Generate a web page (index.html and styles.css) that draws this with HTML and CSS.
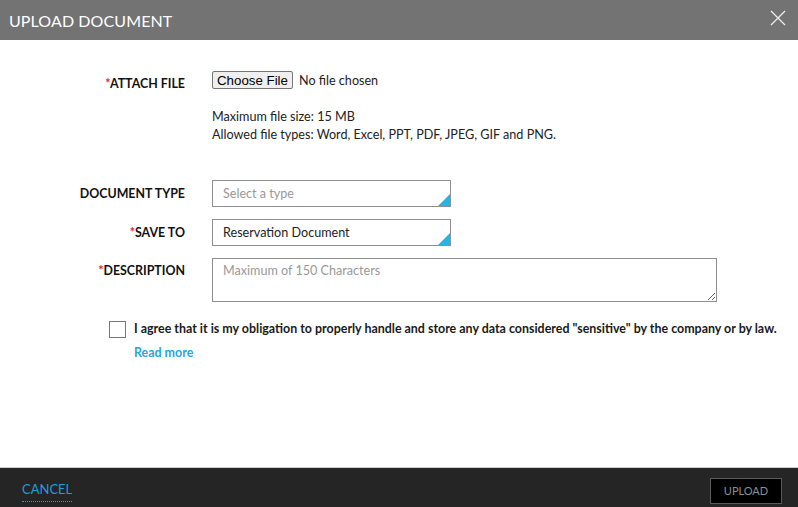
FILE: index.html
```html
<!DOCTYPE html>
<html>
<head>
<meta charset="utf-8">
<link rel="stylesheet" href="styles.css">
</head>
<body>
<div class="dialog">
  <div class="header">
    <div class="title">UPLOAD DOCUMENT</div>
    <div class="close">
      <svg width="16" height="16" viewBox="0 0 16 16"><path d="M1 1L15 15M15 1L1 15" stroke="#eeeeee" stroke-width="1.3" fill="none"/></svg>
    </div>
  </div>
  <div class="content">
    <div class="row row-file">
      <div class="label"><span class="req">*</span>ATTACH FILE</div>
      <div class="field">
        <input type="file" class="file">
      </div>
    </div>
    <div class="row row-hint">
      <div></div>
      <div class="hint">Maximum file size: 15 MB<br>Allowed file types: Word, Excel, PPT, PDF, JPEG, GIF and PNG.</div>
    </div>
    <div class="row row-select first">
      <div class="label">DOCUMENT TYPE</div>
      <div class="select placeholder">Select a type<span class="tri"></span></div>
    </div>
    <div class="row row-select">
      <div class="label"><span class="req">*</span>SAVE TO</div>
      <div class="select">Reservation Document<span class="tri"></span></div>
    </div>
    <div class="row row-desc">
      <div class="label"><span class="req">*</span>DESCRIPTION</div>
      <textarea class="desc" placeholder="Maximum of 150 Characters"></textarea>
    </div>
    <div class="agree">
      <span class="box"></span>
      <div class="agree-text">
        <div>I agree that it is my obligation to properly handle and store any data considered "sensitive" by the company or by law.</div>
        <a class="more">Read more</a>
      </div>
    </div>
  </div>
  <div class="footer">
    <a class="cancel">CANCEL</a>
    <button class="upload">UPLOAD</button>
  </div>
</div>
</body>
</html>
```
FILE: styles.css
```css
* { box-sizing: border-box; }
html, body { margin: 0; padding: 0; }
body {
  width: 798px;
  height: 507px;
  font-family: Lato, "Open Sans", sans-serif;
  background: #fff;
  color: #222;
}
.dialog { display: flex; flex-direction: column; height: 507px; }
.header {
  height: 40px;
  background: #737373;
  display: flex;
  align-items: center;
  padding: 0 12px 0 9px;
}
.title { color: #fff; font-size: 16px; letter-spacing: 0.1px; }
.close { margin-left: auto; display: flex; margin-top: -4px; }
.content { flex: 1; padding-top: 31px; }
.row {
  display: grid;
  grid-template-columns: 185px 1fr;
  column-gap: 27px;
}
.label {
  text-align: right;
  font-weight: 700;
  font-size: 12.4px;
  color: #111;
  white-space: nowrap;
}
.req { color: #e0262b; }
.row-file .label { padding-top: 5px; }
.field { display: flex; }
.file {
  font-family: Lato, sans-serif;
  font-size: 12.6px;
  color: #222;
  margin: 0;
  height: 18px;
}
.file::file-selector-button {
  font-family: "Liberation Sans", Arial, sans-serif;
  font-size: 13.3px;
  height: 18px;
  width: 81px;
  padding: 0;
  margin: 0 6px 0 0;
  background: #efefef;
  border: 1px solid #767676;
  border-radius: 2px;
  color: #000;
}
.row-hint { margin-top: 17px; }
.hint { font-size: 12.6px; line-height: 18px; color: #222; }
.row-select { margin-top: 12px; align-items: center; }
.row-select.first { margin-top: 36px; }
.select {
  position: relative;
  width: 239px;
  height: 27px;
  border: 1px solid #8f8f8f;
  font-size: 12.6px;
  line-height: 25px;
  padding-left: 10px;
  color: #222;
}
.select.placeholder { color: #999; }
.tri {
  position: absolute;
  right: 0;
  bottom: 0;
  width: 0;
  height: 0;
  border-style: solid;
  border-width: 0 0 12px 12px;
  border-color: transparent transparent #26b5e2 transparent;
}
.row-desc { margin-top: 12px; }
.row-desc .label { padding-top: 5px; }
.desc {
  display: block;
  width: 505px;
  height: 44px;
  border: 1px solid #8f8f8f;
  font-family: Lato, sans-serif;
  font-size: 12.6px;
  padding: 4px 10px;
  margin: 0;
  resize: both;
  border-radius: 0;
}
.desc::placeholder { color: #999; }
.agree {
  display: flex;
  gap: 8px;
  padding-left: 109px;
  margin-top: 19px;
}
.box {
  width: 17px;
  height: 17px;
  border: 1px solid #777;
  flex: none;
}
.agree-text { font-size: 12.45px; font-weight: 700; color: #1a1a1a; }
.more {
  display: block;
  color: #27a6dc;
  margin-top: 9px;
}
.footer {
  height: 40px;
  background: #252525;
  border-top: 1px solid #cfcfcf;
  display: flex;
  align-items: center;
  padding: 0 16px 0 22px;
}
.cancel {
  color: #1d9fd8;
  font-size: 13px;
  border-bottom: 1px dotted #1d9fd8;
  padding-bottom: 4px;
  margin-top: 8px;
}
.upload {
  margin-left: auto;
  width: 72px;
  height: 26px;
  background: #000;
  border: 1px solid #5a5a5a;
  color: #8a8f94;
  font-family: Lato, sans-serif;
  font-size: 11px;
  margin-top: 6px;
  padding: 0;
}
```
